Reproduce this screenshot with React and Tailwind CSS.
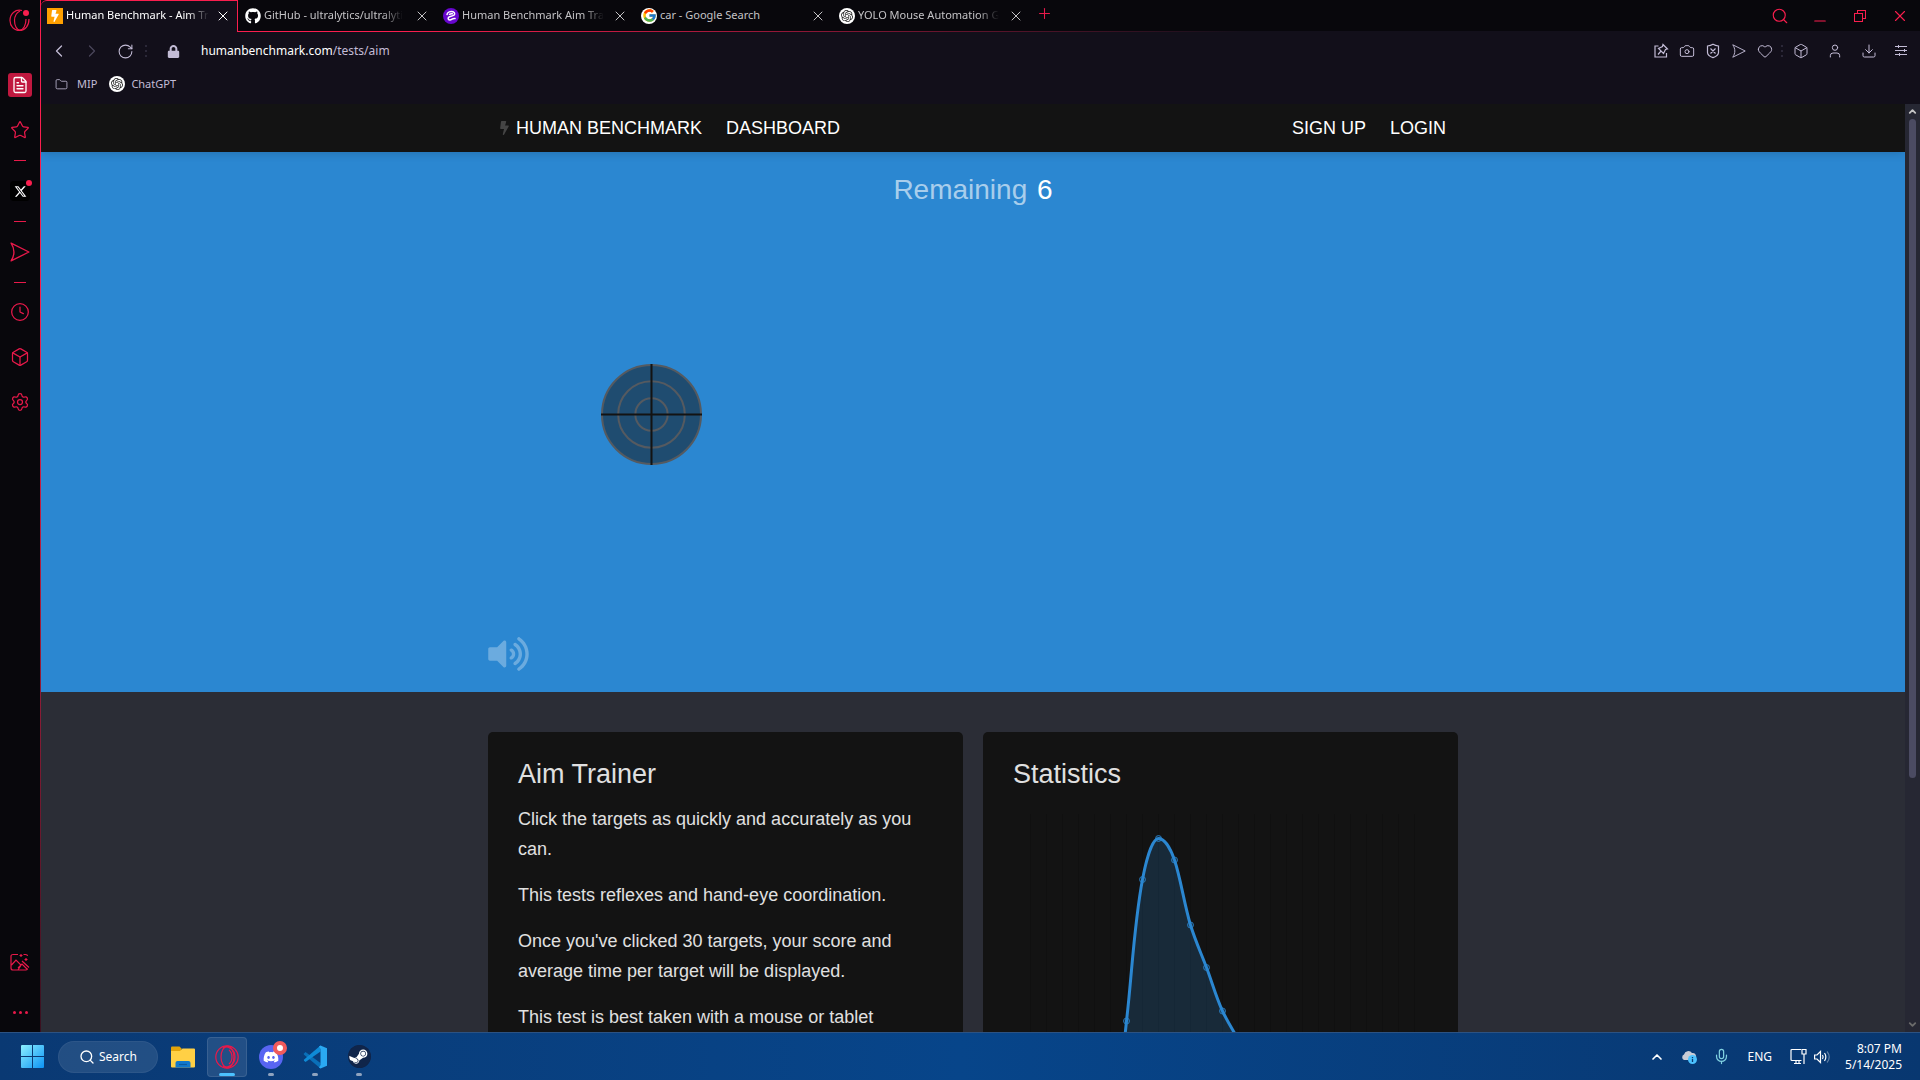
import React, { useState } from 'react';
import {
  Box, Camera, ChevronLeft, ChevronRight, ChevronUp, ChevronDown, Clock, Download, FileText, Folder,
  Heart, Mic, Minus, Plus, RotateCw, Search, Settings, Star, User, X,
} from 'lucide-react';
import { FaBolt, FaDiscord, FaGithub, FaLock, FaSteam, FaVolumeUp } from 'react-icons/fa';
import { FaXTwitter } from 'react-icons/fa6';
import { FcGoogle } from 'react-icons/fc';
import { SiOpenai } from 'react-icons/si';

const BoltIcon = () => (
  <span className="flex size-4 items-center justify-center bg-[#ffa000] text-white">
    <FaBolt size={12} />
  </span>
);

const RoboflowIcon = () => (
  <svg viewBox="0 0 16 16" className="size-4" fill="none" stroke="#fff" strokeWidth="1.5" strokeLinecap="round">
    <circle cx="8" cy="8" r="8" fill="#6706ce" stroke="none" />
    <path d="M4 6.5C4.5 4 7.5 3 10 3.8C12.5 4.8 12 7 10 7.6L6.5 8.8C4.5 9.6 4.8 12 6.8 12C9 12 9.5 9.8 12 10.5M6.5 6.3C7.5 5.5 8.5 5.6 9.3 5.8" />
  </svg>
);

const ChatIcon = () => (
  <span className="flex size-4 items-center justify-center rounded-full bg-white text-[#222]">
    <SiOpenai size={12} />
  </span>
);

const GoogleIcon = () => (
  <span className="flex size-4 items-center justify-center rounded-full bg-white">
    <FcGoogle size={15} />
  </span>
);

const SendIcon = ({ className }) => (
  <svg viewBox="0 0 18 18" className={className} fill="none" stroke="currentColor" strokeWidth="1.2" strokeLinejoin="round">
    <path d="M1 1L17 9L1 17C4.5 11.5 4.5 6.5 1 1Z" />
  </svg>
);

const OperaIcon = () => (
  <svg viewBox="0 0 24 24" className="size-6" fill="none" stroke="#e8194a" strokeWidth="1.2">
    <circle cx="12" cy="12" r="11.2" />
    <ellipse cx="12.5" cy="12" rx="6.5" ry="10.8" />
    <path d="M8 3C12 0 20 4 20 12C20 20 12 24 8 21M14 5C18 8 18 16 14 19" />
  </svg>
);

const OperaMenuIcon = () => (
  <svg viewBox="0 0 24 24" className="size-6" fill="none" stroke="#e8194a" strokeWidth="1.2">
    <path d="M14 2.5C7 1 2 6 2 12.5C2 18 6 22.5 11.5 22.5C17 22.5 21 18 21 11" />
    <path d="M12 3C8 5 6.5 8.5 6.5 12.5C6.5 17 8.500 22 12 22C15.5 22 18 17 18 11" />
    <circle cx="18" cy="5" r="3" fill="#fa1e4e" stroke="none" />
  </svg>
);

const WallpaperIcon = () => (
  <svg viewBox="0 0 20 18" className="h-[18px] w-5" fill="none" stroke="currentColor" strokeWidth="1.2">
    <path d="M8 1.5H3C2 1.5 1 2 1 3V15C1 16 2 17 3 17H16C17 17 17.5 16.5 17.5 15.5M1.5 12L6 7L11 12L8 17M8 15L12 11L17 16M12 8L19 14.5" />
    <path d="M11 1V4M9.5 2.5H12.5M16 5V8M14.5 6.5H17.5M13.5 1.5H15.5C16.5 1.5 17.5 2 17.5 3" />
  </svg>
);

const PinIcon = () => (
  <svg viewBox="0 0 16 16" className="size-4" fill="none" stroke="currentColor" strokeWidth="1.2">
    <path d="M5.5 3H2V14H13.5V10M10 1.5L14.5 6L12.5 6.5L10.5 10.5L5.5 5.5L9.5 3.5ZM8 8L5 11.5" />
  </svg>
);

const ShieldIcon = () => (
  <svg viewBox="0 0 16 16" className="size-4" fill="none" stroke="currentColor" strokeWidth="1.2">
    <path d="M2.5 3C5 2.8 6.500 2.200 8 1.3C9.5 2.200 11 2.8 13.5 3V9.5C13.5 12 10.5 13.8 8 14.6C5.5 13.8 2.5 12 2.5 9.5ZM5.500 5.5L10.5 10.5M10.5 5.5L5.5 10.5" />
  </svg>
);

const SlidersIcon = () => (
  <svg viewBox="0 0 12 12" className="size-3" fill="none" stroke="currentColor" shapeRendering="crispEdges">
    <path d="M0 1.5H12M0 5.5H12M0 9.5H12M3.5 0V3M9.5 4V7M4.5 8V11" />
  </svg>
);

const RestoreIcon = () => (
  <svg viewBox="0 0 12 12" className="size-3" fill="none" stroke="currentColor" shapeRendering="crispEdges">
    <path d="M.5 3.5H8.5V11.5H.5ZM3.5 3V.5H11.5V8.5H9" />
  </svg>
);

const VsCodeIcon = () => (
  <svg viewBox="0 0 24 24" className="size-6">
    <path d="M1 8.5L2.5 7L17.5 18V23.5L.8 9.5Z" fill="#0a6fb8" />
    <path d="M.8 14.8L17.5 .5V6.5L2.5 17L1 15.8Z" fill="#0f8ad6" />
    <path d="M17.5 .5L24 3.2V20.8L17.5 23.5L16 22.5L17.5 20V4L16 1.5Z" fill="#2aa9f3" />
  </svg>
);

const FolderAppIcon = () => (
  <svg viewBox="0 0 24 22" className="h-[22px] w-6">
    <path d="M0 1.5Q0 .5 1 .5H8.5L10.5 2.5V8H0Z" fill="#e2a30a" />
    <path d="M0 5H9L11.5 2.5H23Q24 2.5 24 3.5V20.5Q24 21.5 23 21.5H1Q0 21.5 0 20.5Z" fill="#ffd045" />
    <path d="M4.5 21.5V17Q4.5 15 6.5 15H17.5Q19.5 15 19.5 17V21.5Z" fill="#1178cc" />
    <path d="M8 18.5H16" stroke="#0b5a9f" strokeWidth="1.2" />
  </svg>
);

const WindowsIcon = () => (
  <svg viewBox="0 0 23 23" className="size-[23px]">
    <defs>
      <linearGradient id="win" x1="0" y1="0" x2="1" y2="1">
        <stop offset="0" stopColor="#8cf0ff" />
        <stop offset="1" stopColor="#0c93f5" />
      </linearGradient>
    </defs>
    <path d="M0 1Q0 0 1 0H11V11H0ZM12 0H22Q23 0 23 1V11H12ZM0 12H11V23H1Q0 23 0 22ZM12 12H23V22Q23 23 22 23H12Z" fill="url(#win)" />
  </svg>
);

const CloudIcon = () => (
  <svg viewBox="0 0 16 14" className="h-3.5 w-4">
    <path d="M3 10A3 3 0 0 1 3 4.5A4.5 4.5 0 0 1 11 3A3.5 3.5 0 0 1 12 10Z" fill="#c9ccd6" />
    <circle cx="11.5" cy="9.5" r="4.5" fill="#4cc2ff" />
    <path d="M11.5 9V12M11.5 7V8.2" stroke="#0b3a70" strokeWidth="1.3" />
  </svg>
);

const MonitorIcon = () => (
  <svg viewBox="0 0 17 17" className="size-[17px]" fill="none" stroke="currentColor" strokeWidth="1.2">
    <path d="M11 1.5H2Q1 1.5 1 2.5V11.5Q1 12.5 2 12.5H11.5M4 15.5H11M6 12.5V15.5M9 12.5V15.5" />
    <path d="M12 1.5H16V6H12ZM14 6V16" />
  </svg>
);

const SoundIcon = () => (
  <svg viewBox="0 0 17 14" className="h-3.5 w-[17px]" fill="none" stroke="currentColor" strokeWidth="1.2">
    <path d="M.6 5H3L6.5 1.5V12.5L3 9H.6ZM8.5 5Q9.8 7 8.5 9M10.5 3Q13.2 7 10.5 11" />
    <path d="M13 1.5Q17.5 7 13 12.5" opacity=".35" />
  </svg>
);

const tabs = [
  { title: 'Human Benchmark - Aim Tr', icon: <BoltIcon /> },
  { title: 'GitHub - ultralytics/ultralyti', icon: <FaGithub size={16} color="#fff" /> },
  { title: 'Human Benchmark Aim Tra', icon: <RoboflowIcon /> },
  { title: 'car - Google Search', icon: <GoogleIcon />, short: true },
  { title: 'YOLO Mouse Automation G', icon: <ChatIcon /> },
];

const Tab = ({ title, icon, short, active, onSelect }) => (
  <div
    className={
      active
        ? 'mr-px flex h-8 w-[197px] shrink-0 items-center rounded-tl-md border-t border-r border-[#fa1e4e] bg-[#120f1a] pr-1.5 pb-0.5 pl-1.5 text-white'
        : 'flex h-[31px] w-[198px] shrink-0 items-center pr-[7px] pl-1.5 text-[#c4c3c6]'
    }
  >
    <button onClick={onSelect} className="flex min-w-0 flex-1 items-center gap-[3px] text-left">
      <span className="shrink-0">{icon}</span>
      <span className={short ? 'whitespace-nowrap' : 'mask-r-from-85% whitespace-nowrap'}>{title}</span>
    </button>
    <button aria-label={`Close ${title}`} className="flex w-4 justify-center">
      <X size={16} strokeWidth={1.5} />
    </button>
  </div>
);

const Dash = () => <span className="h-px w-3 bg-[#e8194a]" />;

const Sidebar = () => (
  <aside className="flex w-10 shrink-0 flex-col items-center bg-[#08070c] pt-2 text-[#e8194a]">
    <button aria-label="Opera menu"><OperaMenuIcon /></button>
    <button aria-label="Notes" className="mt-[41px] flex size-6 items-center justify-center rounded-[3px] bg-[#c0183f] text-white">
      <FileText size={18} strokeWidth={1.75} />
    </button>
    <button aria-label="Pinboards" className="mt-[23px]"><Star size={20} strokeWidth={1.5} /></button>
    <div className="mt-5 flex flex-col items-center gap-5">
      <Dash />
      <button aria-label="X" className="relative flex size-5 items-center justify-center rounded bg-black text-white">
        <FaXTwitter size={13} />
        <span className="absolute -top-px -right-0.5 size-1.5 rounded-full bg-[#fa1e4e]" />
      </button>
      <Dash />
      <button aria-label="My Flow"><SendIcon className="size-5" /></button>
      <Dash />
    </div>
    <div className="mt-[19px] flex flex-col items-center gap-[25px]">
      <button aria-label="History"><Clock size={20} strokeWidth={1.5} /></button>
      <button aria-label="Extensions"><Box size={20} strokeWidth={1.5} /></button>
      <button aria-label="Settings"><Settings size={20} strokeWidth={1.5} /></button>
    </div>
    <div className="mt-auto flex flex-col items-center gap-10 pb-[18px]">
      <button aria-label="Wallpapers"><WallpaperIcon /></button>
      <button aria-label="More" className="flex gap-[3px]">
        <span className="size-[3px] rounded-full bg-current" />
        <span className="size-[3px] rounded-full bg-current" />
        <span className="size-[3px] rounded-full bg-current" />
      </button>
    </div>
  </aside>
);

const TabBar = () => {
  const [selected, setSelected] = useState(0);

  return (
    <div className="flex h-[31px] items-start bg-[#08070c] text-[11px]">
      {tabs.map((tab, i) => (
        <Tab key={tab.title} {...tab} active={i === selected} onSelect={() => setSelected(i)} />
      ))}
      <button aria-label="New tab" className="mt-[5px] ml-[5px] text-[#e8194a]"><Plus size={17} strokeWidth={1.5} /></button>
      <div className="ml-auto flex h-[31px] items-center gap-[22px] pr-[11px] text-[#fa1e4e]">
        <button aria-label="Search tabs"><Search size={18} strokeWidth={1.5} /></button>
        <button aria-label="Minimize" className="pt-2.5"><Minus size={18} strokeWidth={1.5} /></button>
        <button aria-label="Restore" className="px-[3px]"><RestoreIcon /></button>
        <button aria-label="Close window"><X size={18} strokeWidth={1.5} /></button>
      </div>
    </div>
  );
};

const Dots = () => (
  <span className="flex flex-col gap-[3px]">
    <span className="size-0.5 bg-[#2b2838]" />
    <span className="size-0.5 bg-[#2b2838]" />
    <span className="size-0.5 bg-[#2b2838]" />
  </span>
);

const Toolbar = () => (
  <div className="bg-[#120f1a] text-[#c3bcd6]">
    <div className="ml-[196px] h-px bg-linear-to-r from-[#fa1e4e] from-10% to-transparent to-60%" />
    <div className="flex h-[38px] items-center pr-[13px] pl-2">
      <button aria-label="Back"><ChevronLeft size={20} strokeWidth={1.5} /></button>
      <button aria-label="Forward" className="ml-[13px] text-[#4a465a]"><ChevronRight size={20} strokeWidth={1.5} /></button>
      <button aria-label="Reload" className="mr-[11px] ml-[15px]"><RotateCw size={17} strokeWidth={1.5} /></button>
      <Dots />
      <FaLock size={13} className="ml-5" />
      <button className="mr-auto ml-[21px] text-left">
        <span className="text-white">humanbenchmark.com</span>/tests/aim
      </button>
      <div className="flex items-center gap-2.5">
        <button aria-label="Pin page"><PinIcon /></button>
        <button aria-label="Snapshot"><Camera size={16} strokeWidth={1.5} /></button>
        <button aria-label="Ad blocker"><ShieldIcon /></button>
        <button aria-label="Send to Flow" className="px-px"><SendIcon className="size-3.5" /></button>
        <button aria-label="Bookmark"><Heart size={16} strokeWidth={1.5} /></button>
      </div>
      <div className="mr-2.5 ml-2"><Dots /></div>
      <div className="flex items-center gap-[18px]">
        <button aria-label="Extensions menu"><Box size={16} strokeWidth={1.5} /></button>
        <button aria-label="Profile"><User size={16} strokeWidth={1.5} /></button>
        <button aria-label="Downloads"><Download size={16} strokeWidth={1.5} /></button>
        <button aria-label="Easy setup"><SlidersIcon /></button>
      </div>
    </div>
    <div className="flex h-[34px] items-center pb-1.5 pl-3.5 text-[11px]">
      <a href="#mip" className="flex items-center gap-[9px]"><Folder size={13} strokeWidth={1.5} />MIP</a>
      <a href="#chatgpt" className="ml-3 flex items-center gap-1.5"><ChatIcon />ChatGPT</a>
    </div>
  </div>
);

const SiteHeader = () => (
  <header className="relative z-10 bg-[#131313] shadow-[0_0_10px_rgba(0,0,0,0.2)]">
    <nav className="mx-auto flex h-12 w-full max-w-[970px] items-center gap-6 px-3 text-lg text-white">
      <a href="#home" className="flex items-center gap-[7px]">
        <FaBolt size={14} className="w-[9px] text-[#444]" />
        HUMAN BENCHMARK
      </a>
      <a href="#dashboard">DASHBOARD</a>
      <a href="#signup" className="ml-auto">SIGN UP</a>
      <a href="#login">LOGIN</a>
    </nav>
  </header>
);

const Target = () => (
  <svg viewBox="0 0 100 100" className="size-full">
    <circle cx="50" cy="50" r="49" fill="#1f4c70" stroke="#555a60" strokeWidth="2" />
    <circle cx="50" cy="50" r="33" fill="none" stroke="#555a60" strokeWidth="2" />
    <circle cx="50" cy="50" r="16" fill="none" stroke="#555a60" strokeWidth="2" />
    <path d="M0 50H100M50 0V100" stroke="#131313" strokeWidth="2" />
  </svg>
);

const AimArea = () => (
  <section className="bg-[#2b87d1]">
    <div className="relative mx-auto flex h-[540px] w-full max-w-[970px] flex-col justify-between pt-4 pb-5">
      <p className="text-center text-[28px] leading-[44px] text-white">
        <span className="mr-0.5 text-white/60">Remaining</span> 6
      </p>
      <button aria-label="Target" className="absolute top-[212px] left-[113px] size-[101px]">
        <Target />
      </button>
      <button aria-label="Toggle sound" className="w-[41px] text-white/30">
        <FaVolumeUp className="h-9 w-[41px]" />
      </button>
    </div>
  </section>
);

const gridLines = Array.from({ length: 25 }, (_, i) => 17.5 + i * 16);

const points = [
  [113.5, 217],
  [129.5, 75.5],
  [145.5, 34.5],
  [161.5, 56],
  [177.5, 121],
  [193.5, 163.5],
  [209.5, 207],
];

const curve =
  'M97.5 300C105 280 109 262 113.5 217C119 170 121 120 129.5 75.5C133 57 139 34.5 145.5 34.5C152 34.5 158 46 161.5 56C168 76 171 99 177.5 121C182 136 188 149 193.5 163.5C199 178 203 193 209.5 207C214 217 220 226 225.5 236C236 258 246 280 257.5 300';

const StatsChart = () => (
  <svg viewBox="0 0 415 300" className="w-full" role="img" aria-label="Score distribution">
    {gridLines.map((x) => (
      <path key={x} d={`M${x} 10V300`} stroke="#101010" />
    ))}
    <path d={curve} fill="#2b87d1" fillOpacity=".2" stroke="#2b87d1" strokeWidth="3" />
    {points.map(([x, y]) => (
      <circle key={x} cx={x} cy={y} r="3" fill="#2b87d1" fillOpacity=".2" stroke="#2b87d1" strokeOpacity=".8" />
    ))}
  </svg>
);

const Card = ({ title, children }) => (
  <article className="flex-1 rounded-[5px] bg-[#131313] px-[30px] pt-6 pb-8">
    <h2 className="mb-3 text-[27px] leading-9">{title}</h2>
    {children}
  </article>
);

const Page = () => (
  <main className="flex min-h-0 flex-1">
    <div className="flex-1 overflow-hidden bg-[#2b2d36] font-['Liberation_Sans',Arial,sans-serif]">
      <SiteHeader />
      <AimArea />
      <div className="mx-auto flex w-full max-w-[970px] items-stretch gap-5 pt-10 text-[#e0e0e0]">
        <Card title="Aim Trainer">
          <div className="flex flex-col gap-4 text-lg leading-[30px]">
            <p>Click the targets as quickly and accurately as you can.</p>
            <p>This tests reflexes and hand-eye coordination.</p>
            <p>Once you've clicked 30 targets, your score and average time per target will be displayed.</p>
            <p>This test is best taken with a mouse or tablet</p>
          </div>
        </Card>
        <Card title="Statistics">
          <StatsChart />
        </Card>
      </div>
    </div>
    <div className="flex w-[15px] flex-col items-center bg-[#262733] text-[#c4c4c4]">
      <ChevronUp size={11} strokeWidth={4} className="my-0.5" />
      <div className="mb-auto h-[71%] w-[7px] rounded-full bg-[#4b4b62]" />
      <ChevronDown size={11} strokeWidth={4} className="my-0.5 text-[#6b6b6b]" />
    </div>
  </main>
);

const TaskApp = ({ label, active, children }) => (
  <button
    aria-label={label}
    className={
      active
        ? 'flex h-10 w-10 flex-col items-center rounded border border-white/10 bg-white/10 pt-[7px]'
        : 'flex h-10 w-10 flex-col items-center border border-transparent pt-[7px]'
    }
  >
    <span className="flex h-6 items-center justify-center">{children}</span>
    {label !== 'File Explorer' && (
      <span className={active ? 'mt-1 h-[3px] w-4 rounded-full bg-[#4cc2ff]' : 'mt-1 h-[3px] w-1.5 rounded-full bg-[#8fa3bf]'} />
    )}
  </button>
);

const Taskbar = () => (
  <footer className="flex h-12 shrink-0 items-center border-t border-[#2c5282] bg-linear-to-r from-[#0a3973] via-[#07458a] to-[#083770] pr-[18px] pl-[21px] text-xs text-white">
    <button aria-label="Start"><WindowsIcon /></button>
    <button className="ml-3.5 flex h-8 w-[100px] items-center justify-center gap-1 rounded-full border border-white/5 bg-white/10">
      <Search size={16} strokeWidth={2} />
      Search
    </button>
    <div className="ml-[5px] flex gap-1">
      <TaskApp label="File Explorer"><FolderAppIcon /></TaskApp>
      <TaskApp label="Opera GX" active><OperaIcon /></TaskApp>
      <TaskApp label="Discord">
        <span className="relative flex size-6 items-center justify-center rounded-full bg-[#5865f2]">
          <FaDiscord size={16} />
          <span className="absolute -top-1 -right-1 size-3.5 rounded-full border-4 border-[#f15b5b] bg-white" />
        </span>
      </TaskApp>
      <TaskApp label="Visual Studio Code"><VsCodeIcon /></TaskApp>
      <TaskApp label="Steam">
        <span className="flex size-[23px] items-center justify-center rounded-full bg-radial from-white from-60% to-[#10254a] to-65% text-[#10254a]">
          <FaSteam size={23} />
        </span>
      </TaskApp>
    </div>
    <div className="ml-auto flex items-center">
      <button aria-label="Show hidden icons"><ChevronUp size={16} strokeWidth={2.5} /></button>
      <button aria-label="OneDrive" className="ml-4"><CloudIcon /></button>
      <button aria-label="Microphone" className="ml-4 text-[#7fd0e0]"><Mic size={17} strokeWidth={1.75} /></button>
      <button className="ml-[17px]">ENG</button>
      <button aria-label="Network and sound" className="ml-[18px] flex items-center gap-[7px]">
        <MonitorIcon />
        <SoundIcon />
      </button>
      <time className="ml-3.5 text-right leading-4">8:07 PM<br />5/14/2025</time>
    </div>
  </footer>
);

const App = () => (
  <div className="flex h-screen w-full flex-col overflow-hidden bg-[#08070c] font-['Noto_Sans','Open_Sans',sans-serif] text-xs">
    <div className="flex min-h-0 flex-1">
      <Sidebar />
      <div className="w-px shrink-0 bg-linear-to-b from-[#fa1e4e] from-30% to-[#3a1020]" />
      <div className="flex min-w-0 flex-1 flex-col">
        <TabBar />
        <Toolbar />
        <Page />
      </div>
    </div>
    <Taskbar />
  </div>
);

export default App;
